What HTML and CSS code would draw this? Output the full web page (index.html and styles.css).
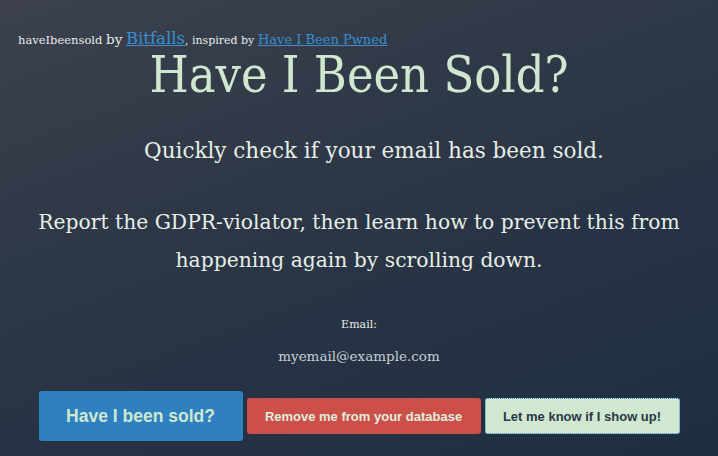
FILE: index.html
```html
<!DOCTYPE html>
<html>

<head>
    <meta charset="UTF-8" />
    <title>Have I Been Sold?</title>
    <link rel="stylesheet" href="styles.css">
</head>

<body>
    <div class="credits">
        <span class="brand">haveIbeensold</span> <span class="by">by</span>
        <a class="big-link" href="#">Bitfalls</a><span class="small">, inspired by</span>
        <a class="mid-link" href="#">Have I Been Pwned</a>
    </div>
    <main class="hero">
        <h1>Have I Been Sold?</h1>
        <p class="lead">Quickly check if your email has been sold.</p>
        <p class="report">Report the GDPR-violator, then learn how to prevent this from happening again by scrolling down.</p>
        <form id="checkform" class="check">
            <label for="email">Email:</label>
            <input type="email" id="email" placeholder="myemail@example.com">
            <div class="actions">
                <button type="submit" class="btn btn-check">Have I been sold?</button>
                <button type="button" class="btn btn-remove">Remove me from your database</button>
                <button type="button" class="btn btn-notify">Let me know if I show up!</button>
            </div>
        </form>
    </main>
</body>

</html>
```

FILE: styles.css
```css
html,
body {
    height: 100%;
}

body {
    margin: 0;
    overflow: hidden;
    background: linear-gradient(160deg, #3c414d 0%, #2c3646 45%, #1d2e41 100%);
    color: #e6eee6;
    font-family: "DejaVu Serif", serif;
}

.credits {
    padding: 32px 0 0 18px;
    font-size: 11.5px;
    color: #e8ecea;
    line-height: 14px;
}

.credits .by {
    font-size: 13.5px;
}

.credits a {
    color: #3a8fd0;
}

.credits .big-link {
    font-size: 16.5px;
}

.credits .small {
    font-size: 11px;
}

.credits .mid-link {
    font-size: 13px;
}

.hero {
    text-align: center;
}

h1 {
    margin: 2px 0 0;
    font-size: 50px;
    font-stretch: condensed;
    font-weight: normal;
    color: #cfe8cf;
    line-height: 50px;
}

.lead {
    margin: 38px 0 0;
    padding-left: 30px;
    font-size: 21.5px;
}

.report {
    margin: 40px auto 0;
    width: 670px;
    font-size: 20.3px;
    line-height: 38px;
}

.check {
    margin-top: 39px;
}

.check label {
    display: block;
    font-size: 11px;
}

.check input {
    display: block;
    margin: 16px auto 0;
    width: 300px;
    background: transparent;
    border: none;
    text-align: center;
    font-family: "DejaVu Serif", serif;
    font-size: 13.5px;
    color: #c6cfd6;
}

.check input::placeholder {
    color: #c6cfd6;
}

.actions {
    display: flex;
    justify-content: center;
    align-items: center;
    gap: 4px;
    margin-top: 26px;
}

.btn {
    font-family: "Liberation Sans", Arial, sans-serif;
    font-weight: bold;
    border-radius: 3px;
    cursor: pointer;
}

.btn-check {
    width: 204px;
    height: 50px;
    font-size: 17.5px;
    background-color: #2e80c0;
    color: #cfe8cf;
    border: none;
}

.btn-remove {
    width: 234px;
    height: 36px;
    font-size: 13px;
    background-color: #cc5049;
    color: #dfeede;
    border: none;
}

.btn-notify {
    width: 195px;
    height: 36px;
    font-size: 13px;
    background-color: #cfe8cf;
    color: #2b3647;
    border: 1px dotted #3a8fd0;
}
```
